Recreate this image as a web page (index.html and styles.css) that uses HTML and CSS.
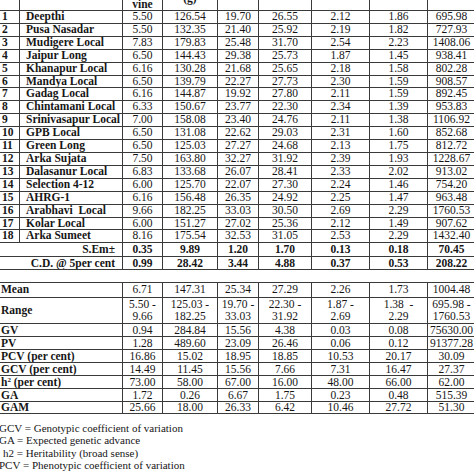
FILE: index.html
```html
<!DOCTYPE html>
<html>
<head>
<meta charset="utf-8">
<link rel="stylesheet" href="styles.css">
</head>
<body>
<div class="page">
<table class="tbl top">
<colgroup>
<col class="w-num"><col class="w-name"><col class="w-c1"><col class="w-c2"><col class="w-c3"><col class="w-c4"><col class="w-c5"><col class="w-c6"><col class="w-c7">
</colgroup>
<tr class="head">
<th></th><th></th><th class="h1">Fruits<br>per<br>vine</th><th class="h2">Fruit<br>weight<br>(g)</th><th></th><th></th><th></th><th></th><th></th>
</tr>
<tr><td class="num">1</td><td class="name">Deepthi</td><td>5.50</td><td>126.54</td><td>19.70</td><td>26.55</td><td>2.12</td><td>1.86</td><td>695.98</td></tr>
<tr><td class="num">2</td><td class="name">Pusa Nasadar</td><td>5.50</td><td>132.35</td><td>21.40</td><td>25.92</td><td>2.19</td><td>1.82</td><td>727.93</td></tr>
<tr><td class="num">3</td><td class="name">Mudigere Local</td><td>7.83</td><td>179.83</td><td>25.48</td><td>31.70</td><td>2.54</td><td>2.23</td><td>1408.06</td></tr>
<tr><td class="num">4</td><td class="name">Jaipur Long</td><td>6.50</td><td>144.43</td><td>29.38</td><td>25.73</td><td>1.87</td><td>1.45</td><td>938.41</td></tr>
<tr><td class="num">5</td><td class="name">Khanapur Local</td><td>6.16</td><td>130.28</td><td>21.68</td><td>25.65</td><td>2.18</td><td>1.58</td><td>802.28</td></tr>
<tr><td class="num">6</td><td class="name">Mandya Local</td><td>6.50</td><td>139.79</td><td>22.27</td><td>27.73</td><td>2.30</td><td>1.59</td><td>908.57</td></tr>
<tr><td class="num">7</td><td class="name">Gadag Local</td><td>6.16</td><td>144.87</td><td>19.92</td><td>27.80</td><td>2.11</td><td>1.59</td><td>892.45</td></tr>
<tr><td class="num">8</td><td class="name">Chintamani Local</td><td>6.33</td><td>150.67</td><td>23.77</td><td>22.30</td><td>2.34</td><td>1.39</td><td>953.83</td></tr>
<tr><td class="num">9</td><td class="name">Srinivasapur Local</td><td>7.00</td><td>158.08</td><td>23.40</td><td>24.76</td><td>2.11</td><td>1.38</td><td>1106.92</td></tr>
<tr><td class="num">10</td><td class="name">GPB Local</td><td>6.50</td><td>131.08</td><td>22.62</td><td>29.03</td><td>2.31</td><td>1.60</td><td>852.68</td></tr>
<tr><td class="num">11</td><td class="name">Green Long</td><td>6.50</td><td>125.03</td><td>27.27</td><td>24.68</td><td>2.13</td><td>1.75</td><td>812.72</td></tr>
<tr><td class="num">12</td><td class="name">Arka Sujata</td><td>7.50</td><td>163.80</td><td>32.27</td><td>31.92</td><td>2.39</td><td>1.93</td><td>1228.67</td></tr>
<tr><td class="num">13</td><td class="name">Dalasanur Local</td><td>6.83</td><td>133.68</td><td>26.07</td><td>28.41</td><td>2.33</td><td>2.02</td><td>913.02</td></tr>
<tr><td class="num">14</td><td class="name">Selection 4-12</td><td>6.00</td><td>125.70</td><td>22.07</td><td>27.30</td><td>2.24</td><td>1.46</td><td>754.20</td></tr>
<tr><td class="num">15</td><td class="name">AHRG-1</td><td>6.16</td><td>156.48</td><td>26.35</td><td>24.92</td><td>2.25</td><td>1.47</td><td>963.48</td></tr>
<tr><td class="num">16</td><td class="name">Arabhavi&nbsp; Local</td><td>9.66</td><td>182.25</td><td>33.03</td><td>30.50</td><td>2.69</td><td>2.29</td><td>1760.53</td></tr>
<tr><td class="num">17</td><td class="name">Kolar Local</td><td>6.00</td><td>151.27</td><td>27.02</td><td>25.36</td><td>2.12</td><td>1.49</td><td>907.62</td></tr>
<tr><td class="num">18</td><td class="name">Arka Sumeet</td><td>8.16</td><td>175.54</td><td>32.53</td><td>31.05</td><td>2.53</td><td>2.29</td><td>1432.40</td></tr>
<tr class="stat"><td class="slabel" colspan="2">S.Em±</td><td>0.35</td><td>9.89</td><td>1.20</td><td>1.70</td><td>0.13</td><td>0.18</td><td>70.45</td></tr>
<tr class="stat"><td class="slabel" colspan="2">C.D. @ 5per cent</td><td>0.99</td><td>28.42</td><td>3.44</td><td>4.88</td><td>0.37</td><td>0.53</td><td>208.22</td></tr>
</table>

<table class="tbl bottom">
<colgroup>
<col class="w-num"><col class="w-name"><col class="w-c1"><col class="w-c2"><col class="w-c3"><col class="w-c4"><col class="w-c5"><col class="w-c6"><col class="w-c7">
</colgroup>
<tr class="r-mean"><td class="lab" colspan="2">Mean</td><td>6.71</td><td>147.31</td><td>25.34</td><td>27.29</td><td>2.26</td><td>1.73</td><td>1004.48</td></tr>
<tr class="r-range"><td class="lab" colspan="2">Range</td><td><div class="rng">5.50 -<br>9.66</div></td><td><div class="rng">125.03 -<br>182.25</div></td><td><div class="rng">19.70 -<br>33.03</div></td><td><div class="rng">22.30 -<br>31.92</div></td><td><div class="rng">1.87 -<br>2.69</div></td><td><div class="rng">1.38&nbsp; -<br>2.29</div></td><td><div class="rng">695.98 -<br>1760.53</div></td></tr>
<tr><td class="lab" colspan="2">GV</td><td>0.94</td><td>284.84</td><td>15.56</td><td>4.38</td><td>0.03</td><td>0.08</td><td>75630.00</td></tr>
<tr><td class="lab" colspan="2">PV</td><td>1.28</td><td>489.60</td><td>23.09</td><td>26.46</td><td>0.06</td><td>0.12</td><td>91377.28</td></tr>
<tr><td class="lab" colspan="2">PCV (per cent)</td><td>16.86</td><td>15.02</td><td>18.95</td><td>18.85</td><td>10.53</td><td>20.17</td><td>30.09</td></tr>
<tr><td class="lab" colspan="2">GCV (per cent)</td><td>14.49</td><td>11.45</td><td>15.56</td><td>7.66</td><td>7.31</td><td>16.47</td><td>27.37</td></tr>
<tr class="r-h2"><td class="lab" colspan="2">h<sup>2</sup> (per cent)</td><td>73.00</td><td>58.00</td><td>67.00</td><td>16.00</td><td>48.00</td><td>66.00</td><td>62.00</td></tr>
<tr><td class="lab" colspan="2">GA</td><td>1.72</td><td>0.26</td><td>6.67</td><td>1.75</td><td>0.23</td><td>0.48</td><td>515.39</td></tr>
<tr class="r-gam"><td class="lab" colspan="2">GAM</td><td>25.66</td><td>18.00</td><td>26.33</td><td>6.42</td><td>10.46</td><td>27.72</td><td>51.30</td></tr>
</table>

<div class="notes">
<div>GCV = Genotypic coefficient of variation</div>
<div>GA = Expected genetic advance</div>
<div class="indent">h2 = Heritability (broad sense)</div>
<div>PCV = Phenotypic coefficient of variation</div>
</div>
</div>
</body>
</html>
```

FILE: styles.css
```css
html, body {
  margin: 0;
  padding: 0;
  background: #ffffff;
}
body {
  width: 474px;
  height: 474px;
  overflow: hidden;
  font-family: "Liberation Serif", "Times New Roman", serif;
  font-size: 11.5px;
  color: #161616;
}
.page {
  width: 474px;
}
.tbl {
  border-collapse: collapse;
  table-layout: fixed;
  width: 476px;
  margin-left: -1px;
}
.tbl td, .tbl th {
  border: 1px solid #3a3a3a;
  padding: 0;
  text-align: center;
  vertical-align: middle;
  line-height: 11.9px;
  white-space: nowrap;
  overflow: hidden;
}
.w-num { width: 20px; }
.w-name { width: 103px; }
.w-c1 { width: 40px; }
.w-c2 { width: 55px; }
.w-c3 { width: 41px; }
.w-c4 { width: 53px; }
.w-c5 { width: 58px; }
.w-c6 { width: 58px; }
.w-c7 { width: 48px; }

.top {
  margin-top: -29px;
}
.top tr.head { height: 36px; }
.top tr.head th {
  border-top: none;
  vertical-align: bottom;
  font-weight: bold;
  line-height: 11px;
}
.top tr.head th.h1 { padding-bottom: 0; }
.top tr.head th.h2 { padding-bottom: 6px; }
.top tr.stat td {
  font-weight: bold;
  line-height: 12.5px;
}

.tbl td.num {
  text-align: left;
  padding-left: 2px;
  font-weight: bold;
}
.tbl td.name {
  text-align: left;
  padding-left: 6px;
  font-weight: bold;
}
.tbl td.slabel {
  text-align: right;
  padding-right: 7px;
}

.bottom {
  margin-top: 12px;
}
.bottom td { line-height: 12px; }
.bottom tr.r-mean td { line-height: 13.5px; }
.bottom tr.r-range td { line-height: 25px; }
.bottom .rng {
  line-height: 12.5px;
}
.bottom tr.r-h2 td { line-height: 12.3px; }
.bottom tr.r-gam td { line-height: 11px; }
.tbl td.lab {
  text-align: left;
  padding-left: 1px;
  font-weight: bold;
}
.tbl td.lab sup {
  font-size: 7px;
  line-height: 0;
  vertical-align: 4px;
}

.notes {
  margin-top: 7.5px;
  margin-left: -1px;
  font-size: 11px;
  line-height: 12.5px;
}
.notes .indent {
  padding-left: 4px;
}
```
